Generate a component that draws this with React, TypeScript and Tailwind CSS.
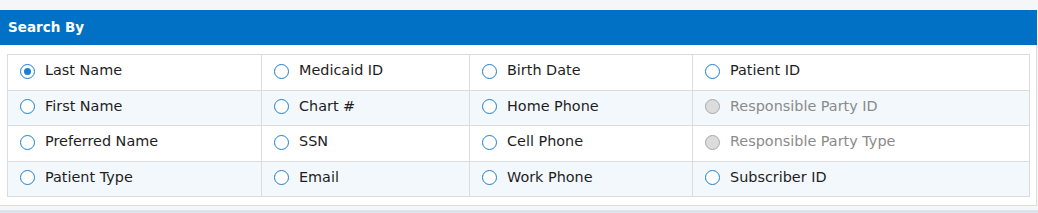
const options = [
  [
    { label: "Last Name", checked: true },
    { label: "Medicaid ID" },
    { label: "Birth Date" },
    { label: "Patient ID" },
  ],
  [
    { label: "First Name" },
    { label: "Chart #" },
    { label: "Home Phone" },
    { label: "Responsible Party ID", disabled: true },
  ],
  [
    { label: "Preferred Name" },
    { label: "SSN" },
    { label: "Cell Phone" },
    { label: "Responsible Party Type", disabled: true },
  ],
  [
    { label: "Patient Type" },
    { label: "Email" },
    { label: "Work Phone" },
    { label: "Subscriber ID" },
  ],
];

type Option = { label: string; checked?: boolean; disabled?: boolean };

function Radio({ checked, disabled }: { checked?: boolean; disabled?: boolean }) {
  if (disabled) {
    return <span className="flex h-[15px] w-[15px] shrink-0 rounded-full border border-[#a8a8a8] bg-[#dcdcdc]" />;
  }
  return (
    <span className="flex h-[15px] w-[15px] shrink-0 items-center justify-center rounded-full border-[1.5px] border-[#1c7fd3] bg-white">
      {checked && <span className="h-[7px] w-[7px] rounded-full bg-[#1c7fd3]" />}
    </span>
  );
}

export default function App() {
  return (
    <div className="min-h-[213px] bg-[#f5f6f8] pt-[10px] font-['DejaVu_Sans',sans-serif]">
      <div className="w-[1037px]">
        <div className="flex h-[35px] items-center bg-[#0071c5] px-2 pb-px text-[13.5px] font-bold text-white">
          Search By
        </div>
        <div className="border-r border-b border-[#dcdcdc] bg-white pt-[9px] pr-[6px] pb-[8px] pl-[7px]">
          <div className="grid grid-cols-[254px_208px_223px_337px] border-t border-l border-[#dcdcdc]">
            {options.map((row, r) =>
              row.map((opt: Option, c) => (
                <label
                  key={`${r}-${c}`}
                  className={`flex h-[35.5px] items-center gap-[10px] border-r border-b border-[#dcdcdc] pl-[12px] pb-[2px] text-[14.4px] ${
                    r % 2 === 1 ? "bg-[#f3f8fc]" : "bg-white"
                  } ${opt.disabled ? "text-[#8a8a8a]" : "text-[#1e1e1e]"}`}
                >
                  <Radio checked={opt.checked} disabled={opt.disabled} />
                  <span>{opt.label}</span>
                </label>
              ))
            )}
          </div>
        </div>
      </div>
      <div className="mt-[4px] h-[4px] bg-[#dce3ec]" />
    </div>
  );
}
